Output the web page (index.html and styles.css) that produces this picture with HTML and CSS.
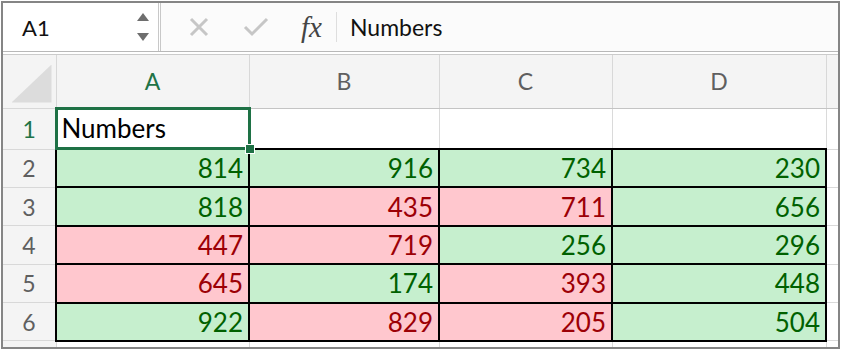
FILE: index.html
```html
<!DOCTYPE html>
<html lang="en">
<head>
  <meta charset="UTF-8" />
  <meta name="viewport" content="width=device-width, initial-scale=1.0" />
  <title>Numbers</title>
  <link rel="stylesheet" href="styles.css">
</head>
<body>
  <div class="window">
    <div class="toolbar">
      <div class="namebox">
        <span class="cellref">A1</span>
        <div class="spinner">
          <svg width="12" height="8" viewBox="0 0 12 8"><path d="M6 0 L12 8 L0 8 Z"/></svg>
          <svg width="12" height="8" viewBox="0 0 12 8"><path d="M0 0 L12 0 L6 8 Z"/></svg>
        </div>
      </div>
      <div class="actions">
        <svg class="icon" width="20" height="20" viewBox="0 0 20 20"><path d="M2 2 L18 18 M18 2 L2 18"/></svg>
        <svg class="icon" width="26" height="20" viewBox="0 0 26 20"><path d="M2 10 L9 17 L24 2"/></svg>
        <span class="fx">fx</span>
      </div>
      <div class="formula">Numbers</div>
    </div>

    <div class="sheet">
      <table class="grid">
        <colgroup>
          <col style="width:53px">
          <col style="width:193px">
          <col style="width:190px">
          <col style="width:173px">
          <col style="width:214px">
          <col style="width:12px">
        </colgroup>
        <tr class="head">
          <th class="corner"><span class="tri"></span></th>
          <th class="col sel">A</th>
          <th class="col">B</th>
          <th class="col">C</th>
          <th class="col">D</th>
          <th class="col"></th>
        </tr>
        <tr class="first">
          <th class="row sel">1</th>
          <td class="active">Numbers</td>
          <td></td><td></td><td></td><td></td>
        </tr>
        <tr>
          <th class="row">2</th>
          <td class="num up">814</td><td class="num up">916</td><td class="num up">734</td><td class="num up">230</td><td></td>
        </tr>
        <tr>
          <th class="row">3</th>
          <td class="num up">818</td><td class="num down">435</td><td class="num down">711</td><td class="num up">656</td><td></td>
        </tr>
        <tr>
          <th class="row">4</th>
          <td class="num down">447</td><td class="num down">719</td><td class="num up">256</td><td class="num up">296</td><td></td>
        </tr>
        <tr>
          <th class="row">5</th>
          <td class="num down">645</td><td class="num up">174</td><td class="num down">393</td><td class="num up">448</td><td></td>
        </tr>
        <tr>
          <th class="row">6</th>
          <td class="num up">922</td><td class="num down">829</td><td class="num down">205</td><td class="num up">504</td><td></td>
        </tr>
        <tr class="last">
          <th class="row"></th>
          <td></td><td></td><td></td><td></td><td></td>
        </tr>
      </table>
    </div>
  </div>
</body>
</html>
```

FILE: styles.css
```css
body {
  margin: 0;
  background: white;
  font-family: 'Lato', 'Open Sans', sans-serif;
}

.window {
  margin: 1px;
  width: 835px;
  height: 344px;
  border: 2px solid #858585;
  overflow: hidden;
}

.toolbar {
  height: 48px;
  display: flex;
  align-items: center;
  background-color: #fbfbfb;
  border-bottom: 1px solid #b8b8b8;
}

.namebox {
  width: 158px;
  height: 48px;
  display: flex;
  align-items: center;
  justify-content: space-between;
  padding: 0 9px 0 19px;
  box-sizing: border-box;
  background-color: white;
  border-right: 3px double #c8c8c8;
}

.cellref {
  font-size: 22px;
  color: #111;
}

.spinner {
  display: flex;
  flex-direction: column;
  gap: 12px;
}

.spinner svg {
  fill: #6e6e6e;
  display: block;
}

.actions {
  display: flex;
  align-items: center;
  box-sizing: border-box;
  width: 176px;
  height: 30px;
  padding-left: 28px;
  gap: 34px;
  border-right: 1px solid #dedede;
}

.icon {
  fill: none;
  stroke: #c6c6c6;
  stroke-width: 3;
}

.fx {
  font-family: 'Liberation Serif', serif;
  font-style: italic;
  font-size: 29px;
  color: #444;
  margin-left: -2px;
}

.formula {
  padding-left: 13px;
  font-size: 23px;
  color: #111;
}

.sheet {
  margin-top: 2px;
  border-top: 1px solid #cbcbcb;
}

.grid {
  border-collapse: collapse;
  table-layout: fixed;
  width: 835px;
}

.grid th {
  background-color: #f4f4f4;
  font-weight: normal;
  font-size: 23px;
  color: #5f5f5f;
  padding: 0;
  border: 1px solid #d8d8d8;
}

.grid th.col {
  border-bottom-color: #c4c4c4;
}

.grid th.sel {
  color: #217346;
}

.grid td {
  border: 1px solid #dadada;
  padding: 0 5px;
  font-size: 26px;
  color: #000;
  white-space: nowrap;
}

.grid tr:first-child th {
  border-top: none;
}

.grid tr th:first-child {
  border-left: none;
}

.grid tr {
  height: 38.4px;
}

.grid tr.head {
  height: 53px;
}

.grid tr.first {
  height: 41px;
}

.grid tr.last {
  height: 20px;
}

.corner {
  vertical-align: bottom;
  text-align: right;
}

.tri {
  display: inline-block;
  width: 40px;
  height: 38px;
  margin: 0 4px 5px 0;
  background-color: #dcdcdc;
  clip-path: polygon(100% 0, 100% 100%, 0 100%);
  vertical-align: bottom;
}

.num {
  text-align: right;
}

.grid td.up {
  background-color: #c6efce;
  color: #006100;
  border: 2px solid #000;
}

.grid td.down {
  background-color: #ffc7ce;
  color: #9c0006;
  border: 2px solid #000;
}

.active {
  position: relative;
}

.active::before {
  content: '';
  position: absolute;
  top: -2px;
  left: -2px;
  right: -2px;
  bottom: -2px;
  border: 3px solid #1e7145;
}

.active::after {
  content: '';
  position: absolute;
  right: -6px;
  bottom: -6px;
  width: 8px;
  height: 8px;
  background-color: #1e7145;
  border: 1px solid white;
  z-index: 2;
}
```
